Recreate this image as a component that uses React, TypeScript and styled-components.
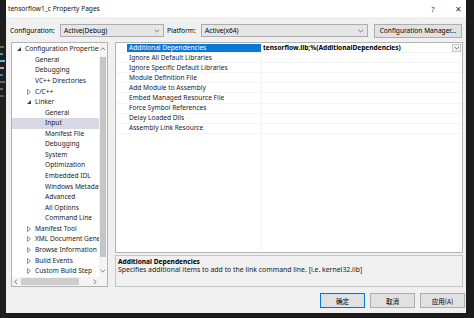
import React from "react";
import styled, { createGlobalStyle, css } from "styled-components";

const GlobalStyle = createGlobalStyle`
  html, body, #root { margin: 0; padding: 0; }
  body {
    background: #1b1b1b;
    font-family: "Noto Sans", "Noto Sans CJK SC", sans-serif;
  }
  * { box-sizing: border-box; }
`;

const Screen = styled.div`
  width: 474px;
  height: 318px;
  overflow: hidden;
  display: flex;
  align-items: flex-start;
  background: #1b1b1b;
`;

const EditorEdge = styled.div`
  width: 6px;
  height: 318px;
  flex: none;
  background: #1e1e1e;
  display: flex;
  flex-direction: column;
  gap: 5px;
  padding-top: 46px;
`;

const Mark = styled.span<{ $c: string; $w: number }>`
  display: block;
  height: 2px;
  width: ${(p) => p.$w}px;
  background: ${(p) => p.$c};
  opacity: 0.75;
`;

const Window = styled.div`
  width: 460px;
  height: 313px;
  flex: none;
  background: #f0f0f0;
  display: flex;
  flex-direction: column;
  font-size: 6.6px;
  line-height: 8px;
  color: #000;
`;

const TitleBar = styled.div`
  height: 17px;
  background: #fff;
  display: flex;
  align-items: center;
  padding-left: 2px;
  gap: 9px;
`;

const TitleText = styled.span`
  flex: 1;
  color: #111;
`;

const CaptionButton = styled.span`
  width: 16px;
  text-align: center;
  font-size: 7.5px;
  color: #333;
`;

const ConfigRow = styled.div`
  height: 15px;
  margin-top: 6px;
  padding-left: 4px;
  display: flex;
  align-items: center;
`;

const Label = styled.span<{ $w: number; $ml?: number }>`
  width: ${(p) => p.$w}px;
  margin-left: ${(p) => p.$ml ?? 0}px;
  flex: none;
  white-space: nowrap;
`;

const Combo = styled.div<{ $w: number }>`
  width: ${(p) => p.$w}px;
  height: 13px;
  flex: none;
  background: #e6e6e6;
  border: 1px solid #acacac;
  display: flex;
  align-items: center;
  padding: 0 3px 0 3px;
  justify-content: space-between;
`;

const PushButton = styled.div<{ $w: number; $ml?: number; $default?: boolean }>`
  width: ${(p) => p.$w}px;
  height: 14px;
  margin-left: ${(p) => p.$ml ?? 0}px;
  flex: none;
  background: #e1e1e1;
  border: 1px solid #adadad;
  display: flex;
  align-items: center;
  justify-content: center;
  white-space: nowrap;
  ${(p) =>
    p.$default &&
    css`
      border-color: #0078d7;
      box-shadow: inset 0 0 0 1px #cfe3f5;
    `}
`;

const Main = styled.div`
  height: 245px;
  margin-top: 4px;
  padding-left: 5px;
  display: flex;
  gap: 7px;
`;

const Tree = styled.div`
  width: 97px;
  flex: none;
  background: #fff;
  border: 1px solid #b4b4b4;
  display: grid;
  grid-template-columns: 1fr 8px;
  grid-template-rows: 1fr 9px;
  overflow: hidden;
`;

const TreeBody = styled.div`
  padding-top: 1px;
  overflow: hidden;
  display: flex;
  flex-direction: column;
`;

const TreeRow = styled.div<{ $level: number; $selected?: boolean }>`
  height: 10.57px;
  flex: none;
  display: flex;
  align-items: center;
  padding-left: ${(p) => 3 + p.$level * 10}px;
  white-space: nowrap;
  color: #1a1a1a;
  background: ${(p) => (p.$selected ? "#d9d9e5" : "transparent")};
`;

const Expander = styled.span`
  width: 10px;
  flex: none;
  display: flex;
  align-items: center;
  padding-left: 2px;
`;

const VScroll = styled.div`
  background: #f4f4f4;
  display: grid;
  grid-template-rows: 12px 1fr 12px;
  justify-items: center;
  align-items: center;
`;

const VTrack = styled.div`
  align-self: stretch;
  justify-self: stretch;
  padding: 2px 1px 0 1px;
`;

const VThumb = styled.div`
  height: 200px;
  background: #c6c6c6;
`;

const HScroll = styled.div`
  background: #f4f4f4;
  display: grid;
  grid-template-columns: 8px 1fr 8px;
  align-items: center;
  justify-items: center;
`;

const HTrack = styled.div`
  justify-self: stretch;
  align-self: stretch;
  padding: 1px 0 1px 1px;
`;

const HThumb = styled.div`
  width: 58px;
  height: 100%;
  background: #cdcdcd;
`;

const Corner = styled.div`
  background: #f4f4f4;
`;

const RightPane = styled.div`
  width: 348px;
  flex: none;
  display: flex;
  flex-direction: column;
  gap: 2px;
`;

const Grid = styled.div`
  height: 211px;
  flex: none;
  background: #fff;
  border: 1px solid #b4b4b4;
  display: flex;
  flex-direction: column;
  position: relative;
`;

const GridDivider = styled.div`
  position: absolute;
  top: 0;
  bottom: 0;
  left: 145px;
  width: 1px;
  background: #f3f3f3;
`;

const GridRow = styled.div`
  height: 10.1px;
  flex: none;
  display: grid;
  grid-template-columns: 11px 134px 1fr;
  border-bottom: 1px solid #f5f5f5;
`;

const Gutter = styled.div``;

const NameCell = styled.div<{ $selected?: boolean }>`
  display: flex;
  align-items: center;
  padding-left: 2px;
  white-space: nowrap;
  color: #1a1a1a;
  ${(p) =>
    p.$selected &&
    css`
      background: #0a78d6;
      color: #fff;
      box-shadow: inset 0 1px 0 #fff;
    `}
`;

const ValueCell = styled.div`
  display: flex;
  align-items: center;
  padding-left: 2px;
  padding-right: 1px;
  justify-content: space-between;
  white-space: nowrap;
  font-weight: 700;
`;

const DropBox = styled.div`
  width: 9px;
  height: 8px;
  border: 1px solid #c8c8c8;
  background: #f2f2f2;
  display: flex;
  align-items: center;
  justify-content: center;
`;

const Description = styled.div`
  flex: 1;
  border: 1px solid #c4c4c4;
  background: #f0f0f0;
  padding: 2px 2px 0 2px;
`;

const DescTitle = styled.div`
  font-weight: 700;
`;

const DescText = styled.div`
  white-space: nowrap;
  color: #222;
  font-size: 6.9px;
`;

const Footer = styled.div`
  margin-top: 6px;
  padding-right: 1px;
  display: flex;
  justify-content: flex-end;
  gap: 5px;
`;

const DialogButton = styled(PushButton)`
  height: 15px;
  font-family: "Noto Sans CJK SC", "Noto Sans", sans-serif;
  font-size: 6.6px;
`;

const Chevron = ({ dir = "down" }: { dir?: "down" | "up" | "left" | "right" }) => {
  const pts: Record<string, string> = {
    down: "0.5,0.8 2.75,3 5,0.8",
    up: "0.5,3 2.75,0.8 5,3",
    left: "3,0.5 0.8,2.75 3,5",
    right: "0.8,0.5 3,2.75 0.8,5",
  };
  const horiz = dir === "left" || dir === "right";
  return (
    <svg width={horiz ? 4 : 6} height={horiz ? 6 : 4} viewBox={horiz ? "0 0 4 6" : "0 0 6 4"}>
      <polyline points={pts[dir]} fill="none" stroke="#6a6a6a" strokeWidth="0.9" />
    </svg>
  );
};

const OpenArrow = () => (
  <svg width="4" height="4" viewBox="0 0 4 4">
    <path d="M4 0 L4 4 L0 4 Z" fill="#3a3a3a" />
  </svg>
);

const ClosedArrow = () => (
  <svg width="4" height="6" viewBox="0 0 4 6">
    <path d="M0.5 0.5 L3.5 3 L0.5 5.5 Z" fill="none" stroke="#7a7a7a" strokeWidth="0.8" />
  </svg>
);

type TreeItem = { label: string; level: number; exp?: "open" | "closed"; selected?: boolean };

const treeItems: TreeItem[] = [
  { label: "Configuration Properties", level: 0, exp: "open" },
  { label: "General", level: 1 },
  { label: "Debugging", level: 1 },
  { label: "VC++ Directories", level: 1 },
  { label: "C/C++", level: 1, exp: "closed" },
  { label: "Linker", level: 1, exp: "open" },
  { label: "General", level: 2 },
  { label: "Input", level: 2, selected: true },
  { label: "Manifest File", level: 2 },
  { label: "Debugging", level: 2 },
  { label: "System", level: 2 },
  { label: "Optimization", level: 2 },
  { label: "Embedded IDL", level: 2 },
  { label: "Windows Metadata", level: 2 },
  { label: "Advanced", level: 2 },
  { label: "All Options", level: 2 },
  { label: "Command Line", level: 2 },
  { label: "Manifest Tool", level: 1, exp: "closed" },
  { label: "XML Document Generator", level: 1, exp: "closed" },
  { label: "Browse Information", level: 1, exp: "closed" },
  { label: "Build Events", level: 1, exp: "closed" },
  { label: "Custom Build Step", level: 1, exp: "closed" },
];

const properties = [
  "Additional Dependencies",
  "Ignore All Default Libraries",
  "Ignore Specific Default Libraries",
  "Module Definition File",
  "Add Module to Assembly",
  "Embed Managed Resource File",
  "Force Symbol References",
  "Delay Loaded Dlls",
  "Assembly Link Resource",
];

const marks = [
  { c: "#6a9955", w: 4 },
  { c: "#4ec9b0", w: 3 },
  { c: "#9cdcfe", w: 5 },
  { c: "#dcdcdc", w: 4 },
  { c: "#569cd6", w: 3 },
  { c: "#808080", w: 5 },
  { c: "#808080", w: 3 },
  { c: "#6a6a6a", w: 4 },
];

export default function App() {
  return (
    <>
      <GlobalStyle />
      <Screen>
        <EditorEdge>
          {marks.map((m, i) => (
            <Mark key={i} $c={m.c} $w={m.w} />
          ))}
        </EditorEdge>
        <Window>
          <TitleBar>
            <TitleText>tensorflow1_c Property Pages</TitleText>
            <CaptionButton>?</CaptionButton>
            <CaptionButton>✕</CaptionButton>
          </TitleBar>

          <ConfigRow>
            <Label $w={50}>Configuration:</Label>
            <Combo $w={104}>
              <span>Active(Debug)</span>
              <Chevron />
            </Combo>
            <Label $w={34} $ml={3}>
              Platform:
            </Label>
            <Combo $w={167}>
              <span>Active(x64)</span>
              <Chevron />
            </Combo>
            <PushButton $w={88} $ml={6}>
              Configuration Manager...
            </PushButton>
          </ConfigRow>

          <Main>
            <Tree>
              <TreeBody>
                {treeItems.map((t, i) => (
                  <TreeRow key={i} $level={t.level} $selected={t.selected}>
                    <Expander>
                      {t.exp === "open" && <OpenArrow />}
                      {t.exp === "closed" && <ClosedArrow />}
                    </Expander>
                    {t.label}
                  </TreeRow>
                ))}
              </TreeBody>
              <VScroll>
                <Chevron dir="up" />
                <VTrack>
                  <VThumb />
                </VTrack>
                <Chevron dir="down" />
              </VScroll>
              <HScroll>
                <Chevron dir="left" />
                <HTrack>
                  <HThumb />
                </HTrack>
                <Chevron dir="right" />
              </HScroll>
              <Corner />
            </Tree>

            <RightPane>
              <Grid>
                <GridDivider />
                {properties.map((p, i) => (
                  <GridRow key={p}>
                    <Gutter />
                    <NameCell $selected={i === 0}>{p}</NameCell>
                    <ValueCell>
                      {i === 0 && (
                        <>
                          <span>tensorflow.lib;%(AdditionalDependencies)</span>
                          <DropBox>
                            <Chevron />
                          </DropBox>
                        </>
                      )}
                    </ValueCell>
                  </GridRow>
                ))}
              </Grid>
              <Description>
                <DescTitle>Additional Dependencies</DescTitle>
                <DescText>
                  Specifies additional items to add to the link command line. [i.e. kernel32.lib]
                </DescText>
              </Description>
            </RightPane>
          </Main>

          <Footer>
            <DialogButton $w={45} $default>
              确定
            </DialogButton>
            <DialogButton $w={45}>取消</DialogButton>
            <DialogButton $w={45}>应用(A)</DialogButton>
          </Footer>
        </Window>
      </Screen>
    </>
  );
}
